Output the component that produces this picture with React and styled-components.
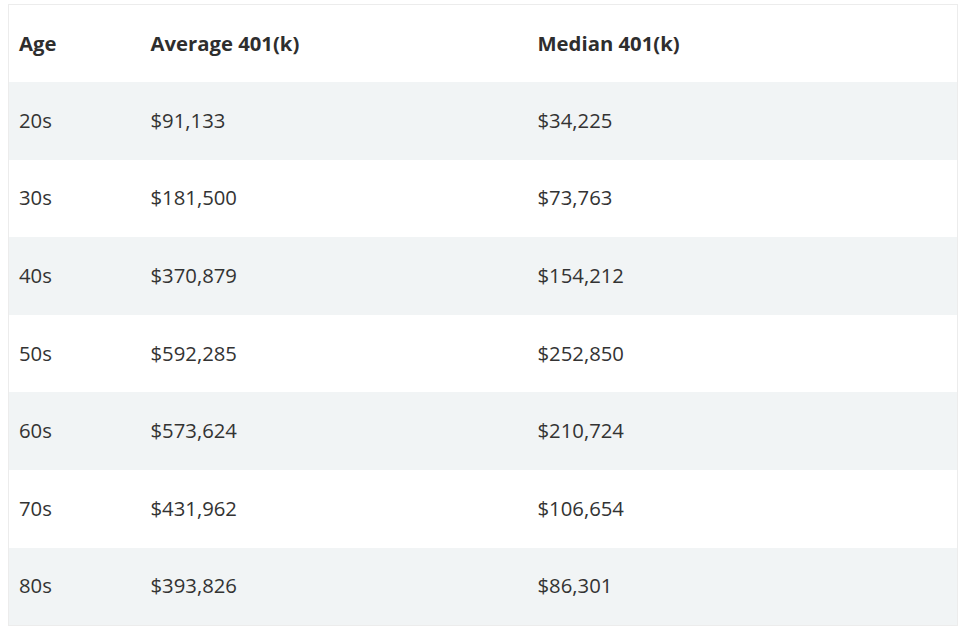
import React from "react";
import styled, { createGlobalStyle } from "styled-components";

const Global = createGlobalStyle`
  html, body { margin: 0; padding: 0; background: #fff; }
  body { font-family: "Open Sans", "Liberation Sans", sans-serif; color: #333; }
`;

const Wrap = styled.div`
  padding: 4px 0 0 8px;
`;

const Table = styled.table`
  width: 950px;
  border-collapse: collapse;
  table-layout: fixed;
  border: 1px solid #ececec;
  font-size: 20.3px;
  line-height: 30px;
`;

const Row = styled.tr`
  background: ${(p) => (p.$alt ? "#f1f4f5" : "#fff")};
`;

const Th = styled.th`
  text-align: left;
  font-weight: 700;
  padding: 22.5px 10px 24.5px 10px;
  color: #2e2e2e;
`;

const Td = styled.td`
  padding: 22.8px 10px 24.8px 10px;
  font-weight: 400;
  color: #333;
`;

const rows = [
  ["20s", "$91,133", "$34,225"],
  ["30s", "$181,500", "$73,763"],
  ["40s", "$370,879", "$154,212"],
  ["50s", "$592,285", "$252,850"],
  ["60s", "$573,624", "$210,724"],
  ["70s", "$431,962", "$106,654"],
  ["80s", "$393,826", "$86,301"],
];

export default function App() {
  return (
    <>
      <Global />
      <Wrap>
        <Table>
          <colgroup>
            <col style={{ width: 132 }} />
            <col style={{ width: 387 }} />
            <col />
          </colgroup>
          <thead>
            <Row>
              <Th>Age</Th>
              <Th>Average 401(k)</Th>
              <Th>Median 401(k)</Th>
            </Row>
          </thead>
          <tbody>
            {rows.map((r, i) => (
              <Row key={r[0]} $alt={i % 2 === 0}>
                <Td>{r[0]}</Td>
                <Td>{r[1]}</Td>
                <Td>{r[2]}</Td>
              </Row>
            ))}
          </tbody>
        </Table>
      </Wrap>
    </>
  );
}
